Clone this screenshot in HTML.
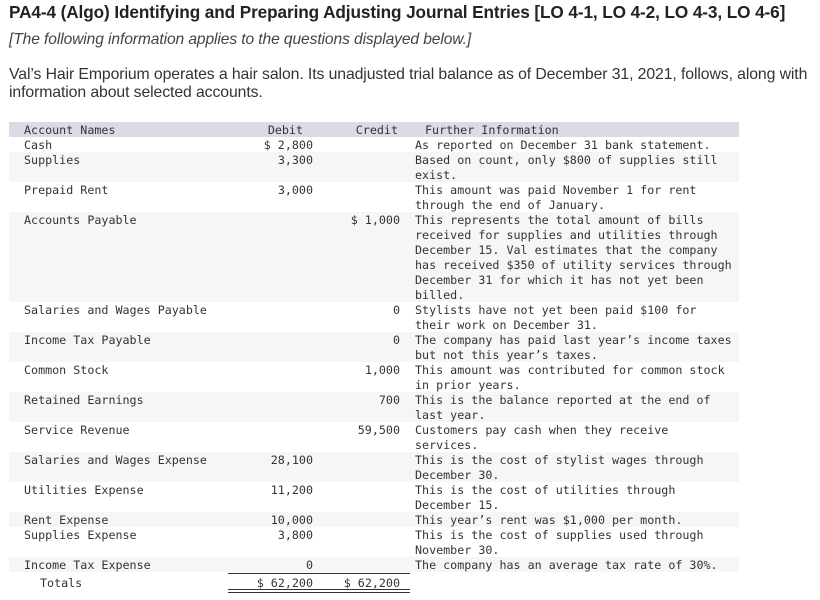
<!DOCTYPE html>
<html><head><meta charset="utf-8"><style>
body{margin:0;width:820px;height:600px;background:#fff;position:relative;font-family:"Liberation Sans",sans-serif;color:#333;overflow:hidden}
.t{position:absolute;left:9px;top:2px;font-size:17.2px;font-weight:bold;color:#222;white-space:nowrap;letter-spacing:-0.1px}
.i{position:absolute;left:9px;top:31px;font-size:15.6px;font-style:italic;color:#444;white-space:nowrap;letter-spacing:-0.1px}
.p{position:absolute;left:9px;top:66px;font-size:15.8px;line-height:18px;color:#333;width:810px;letter-spacing:-0.1px}
.r{position:absolute;left:9px;width:730px;font-family:"DejaVu Sans Mono",monospace;font-size:11.7px;line-height:15px;color:#333}
.s{background:#f6f6f6}
.h{background:#d9dce6}
.r span{position:absolute;top:1px;white-space:pre}
.n{left:15px}.d{right:426px;text-align:right}.c{right:339px;text-align:right}.f{left:406px}
</style></head><body>
<div class="t">PA4-4 (Algo) Identifying and Preparing Adjusting Journal Entries [LO 4-1, LO 4-2, LO 4-3, LO 4-6]</div>
<div class="i">[The following information applies to the questions displayed below.]</div>
<div class="p">Val’s Hair Emporium operates a hair salon. Its unadjusted trial balance as of December 31, 2021, follows, along with information about selected accounts.</div>

<div class="r h" style="top:122px;height:15px"><span class="n">Account Names</span><span class="d" style="right:436px">Debit</span><span class="c" style="right:341px">Credit</span><span class="f" style="left:416px">Further Information</span></div>
<div class="r" style="top:137px;height:15px"><span class="n">Cash</span><span class="d">$ 2,800</span><span class="f">As reported on December 31 bank statement.</span></div>
<div class="r s" style="top:152px;height:30px"><span class="n">Supplies</span><span class="d">3,300</span><span class="f">Based on count, only $800 of supplies still
exist.</span></div>
<div class="r" style="top:182px;height:30px"><span class="n">Prepaid Rent</span><span class="d">3,000</span><span class="f">This amount was paid November 1 for rent
through the end of January.</span></div>
<div class="r s" style="top:212px;height:90px"><span class="n">Accounts Payable</span><span class="c">$ 1,000</span><span class="f">This represents the total amount of bills
received for supplies and utilities through
December 15. Val estimates that the company
has received $350 of utility services through
December 31 for which it has not yet been
billed.</span></div>
<div class="r" style="top:302px;height:30px"><span class="n">Salaries and Wages Payable</span><span class="c">0</span><span class="f">Stylists have not yet been paid $100 for
their work on December 31.</span></div>
<div class="r s" style="top:332px;height:30px"><span class="n">Income Tax Payable</span><span class="c">0</span><span class="f">The company has paid last year’s income taxes
but not this year’s taxes.</span></div>
<div class="r" style="top:362px;height:30px"><span class="n">Common Stock</span><span class="c">1,000</span><span class="f">This amount was contributed for common stock
in prior years.</span></div>
<div class="r s" style="top:392px;height:30px"><span class="n">Retained Earnings</span><span class="c">700</span><span class="f">This is the balance reported at the end of
last year.</span></div>
<div class="r" style="top:422px;height:30px"><span class="n">Service Revenue</span><span class="c">59,500</span><span class="f">Customers pay cash when they receive
services.</span></div>
<div class="r s" style="top:452px;height:30px"><span class="n">Salaries and Wages Expense</span><span class="d">28,100</span><span class="f">This is the cost of stylist wages through
December 30.</span></div>
<div class="r" style="top:482px;height:30px"><span class="n">Utilities Expense</span><span class="d">11,200</span><span class="f">This is the cost of utilities through
December 15.</span></div>
<div class="r s" style="top:512px;height:15px"><span class="n">Rent Expense</span><span class="d">10,000</span><span class="f">This year’s rent was $1,000 per month.</span></div>
<div class="r" style="top:527px;height:30px"><span class="n">Supplies Expense</span><span class="d">3,800</span><span class="f">This is the cost of supplies used through
November 30.</span></div>
<div class="r s" style="top:557px;height:15px"><span class="n">Income Tax Expense</span><span class="d">0</span><span class="f">The company has an average tax rate of 30%.</span></div>
<div class="r" style="top:575px;height:15px"><span class="n" style="left:31px">Totals</span><span class="d">$ 62,200</span><span class="c">$ 62,200</span></div>
<div style="position:absolute;left:228px;top:573px;width:182px;border-top:1px solid #333"></div>
<div style="position:absolute;left:228px;top:589px;width:182px;height:2px;border-top:1px solid #333;border-bottom:1px solid #333"></div>
</body></html>
